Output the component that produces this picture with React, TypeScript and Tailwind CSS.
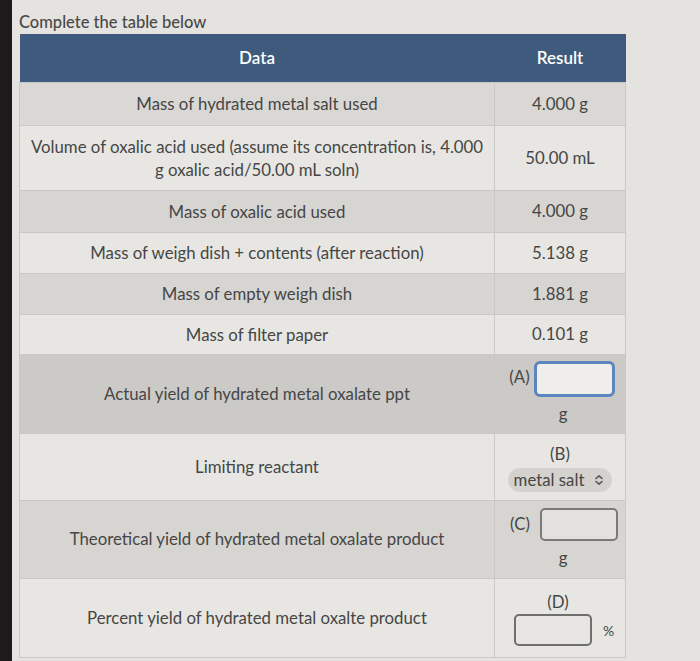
import React from 'react';

interface Row {
    label: React.ReactNode;
    result: React.ReactNode;
    h: string;
    shade: string;
}

const font = { fontFamily: 'Lato, "Open Sans", sans-serif' };

function ChevronUpDown() {
    return (
        <svg width="10" height="12" viewBox="0 0 10 12" fill="none" stroke="#555" strokeWidth="1.6" strokeLinecap="round" strokeLinejoin="round">
            <path d="M2 4.5 L5 1.8 L8 4.5" />
            <path d="M2 7.5 L5 10.2 L8 7.5" />
        </svg>
    );
}

export default function App() {
    const rows: Row[] = [
        { label: 'Mass of hydrated metal salt used', result: '4.000 g', h: 'h-[43px]', shade: 'bg-[#d9d8d4]' },
        {
            label: (
                <>
                    Volume of oxalic acid used (assume its concentration is, 4.000
                    <br />g oxalic acid/50.00 mL soln)
                </>
            ),
            result: '50.00 mL',
            h: 'h-[65px]',
            shade: 'bg-[#e7e6e2]',
        },
        { label: 'Mass of oxalic acid used', result: '4.000 g', h: 'h-[42px]', shade: 'bg-[#d6d5d1]' },
        { label: 'Mass of weigh dish + contents (after reaction)', result: '5.138  g', h: 'h-[41px]', shade: 'bg-[#e7e6e2]' },
        { label: 'Mass of empty weigh dish', result: '1.881 g', h: 'h-[41px]', shade: 'bg-[#d6d5d1]' },
        { label: 'Mass of filter paper', result: '0.101 g', h: 'h-[40px]', shade: 'bg-[#e7e6e2]' },
    ];

    return (
        <div className="w-[700px] h-[661px] flex bg-[#e4e3df] text-[#464646]" style={font}>
            {/* dark bezel on the left */}
            <div className="w-[12px] h-full bg-[#1c1a1a]" />
            <div className="pl-[7px] pt-[11px]">
                <div className="text-[16.5px] leading-[22px] text-[#4a4848] font-medium">Complete the table below</div>
                <table className="mt-[1px] w-[607px] border-collapse text-[16.8px]">
                    <thead>
                        <tr className="h-[48px] bg-[#3e5a7c] text-white text-[17px]">
                            <th className="w-[475px] font-semibold">Data</th>
                            <th className="font-semibold">Result</th>
                        </tr>
                    </thead>
                    <tbody>
                        {rows.map((r, i) => (
                            <tr key={i} className={`${r.h} ${r.shade}`}>
                                <td className="border border-[#c9c8c4] text-center leading-[23px] px-1">{r.label}</td>
                                <td className="border border-[#c9c8c4] text-center">{r.result}</td>
                            </tr>
                        ))}

                        {/* Actual yield */}
                        <tr className="h-[79px] bg-[#cbcac6]">
                            <td className="border border-[#c9c8c4] text-center">Actual yield of hydrated metal oxalate ppt</td>
                            <td className="border border-[#c9c8c4]">
                                <div className="flex flex-col items-center">
                                    <div className="flex items-start gap-[4px] ml-[4px]">
                                        <span className="mt-[3px]">(A)</span>
                                        <div className="w-[81px] h-[36px] rounded-[6px] border-[3px] border-[#5c86bd] bg-[#efeeea]" />
                                    </div>
                                    <span className="mt-[4px] ml-[6px]">g</span>
                                </div>
                            </td>
                        </tr>

                        {/* Limiting reactant */}
                        <tr className="h-[67px] bg-[#e7e6e2]">
                            <td className="border border-[#c9c8c4] text-center">Limiting reactant</td>
                            <td className="border border-[#c9c8c4]">
                                <div className="flex flex-col items-center">
                                    <span>(B)</span>
                                    <div className="mt-[1px] flex items-center gap-[10px] rounded-full bg-[#d3d2ce] pl-[6px] pr-[8px] h-[24px]">
                                        metal salt
                                        <ChevronUpDown />
                                    </div>
                                </div>
                            </td>
                        </tr>

                        {/* Theoretical yield */}
                        <tr className="h-[78px] bg-[#d6d5d1]">
                            <td className="border border-[#c9c8c4] text-center">Theoretical yield of hydrated metal oxalate product</td>
                            <td className="border border-[#c9c8c4]">
                                <div className="flex flex-col items-center">
                                    <div className="flex items-start gap-[10px] ml-[8px]">
                                        <span className="mt-[3px]">(C)</span>
                                        <div className="w-[78px] h-[33px] rounded-[5px] border-2 border-[#7a7a78] bg-[#e2e1dd]" />
                                    </div>
                                    <span className="mt-[4px] ml-[6px]">g</span>
                                </div>
                            </td>
                        </tr>

                        {/* Percent yield */}
                        <tr className="h-[79px] bg-[#e7e6e2]">
                            <td className="border border-[#c9c8c4] text-center">Percent yield of hydrated metal oxalte product</td>
                            <td className="border border-[#c9c8c4]">
                                <div className="flex flex-col items-center">
                                    <span className="-ml-[4px]">(D)</span>
                                    <div className="flex items-center gap-[11px] ml-[8px]">
                                        <div className="w-[78px] h-[32px] rounded-[5px] border-2 border-[#6f6f6d] bg-[#e7e6e2]" />
                                        <span className="text-[14px]">%</span>
                                    </div>
                                </div>
                            </td>
                        </tr>
                    </tbody>
                </table>
            </div>
        </div>
    );
}
